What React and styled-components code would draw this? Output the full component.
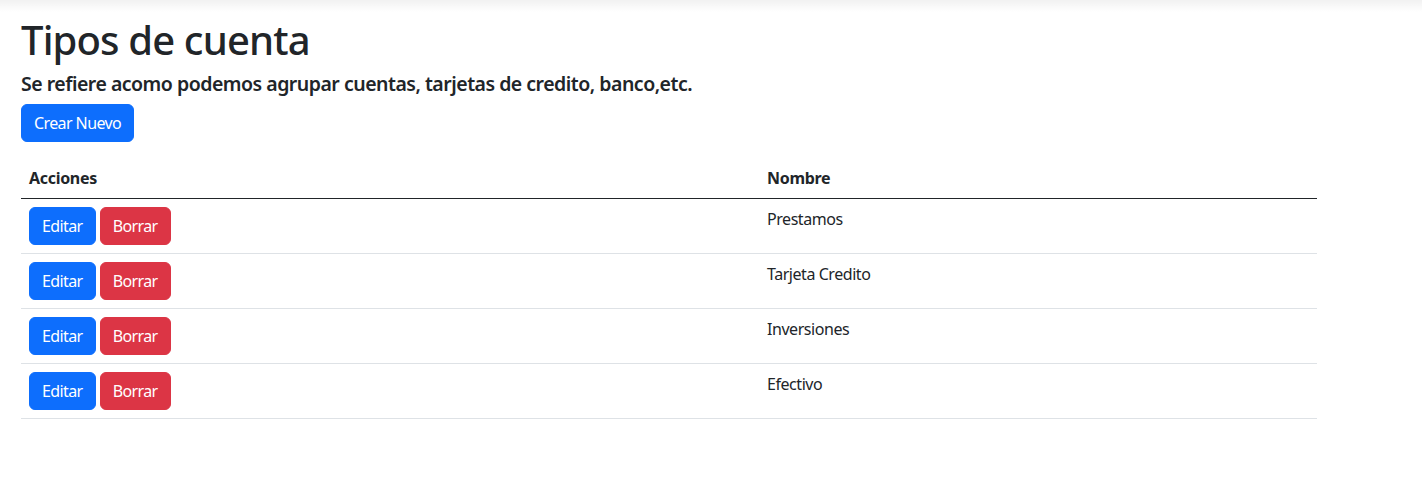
import React from 'react';
import styled, { createGlobalStyle } from 'styled-components';

const Global = createGlobalStyle`
  body {
    margin: 0;
    background: #fff;
    color: #212529;
    font-family: "Noto Sans", "Open Sans", sans-serif;
    font-size: 16px;
    line-height: 1.5;
  }
`;

// sombra del navbar que queda arriba del recorte
const TopShade = styled.div`
  height: 12px;
  background: linear-gradient(to bottom, rgba(0, 0, 0, 0.055), rgba(0, 0, 0, 0));
`;

const Container = styled.main`
  padding: 4px 21px 0;
  width: 1296px;
`;

const Titulo = styled.h1`
  margin: 0 0 8px;
  font-size: 40px;
  font-weight: 500;
  line-height: 48px;
  letter-spacing: -0.85px;
`;

const SubTitulo = styled.h5`
  margin: 0 0 8px;
  font-size: 19.5px;
  font-weight: 600;
  line-height: 24px;
  letter-spacing: -0.5px;
`;

const Boton = styled.button`
  font-family: inherit;
  font-size: 16px;
  line-height: 24px;
  letter-spacing: -0.6px;
  padding: 6px 12px;
  border: 1px solid ${(p) => p.$color};
  border-radius: 6px;
  background: ${(p) => p.$color};
  color: #fff;
  cursor: pointer;
`;

const Tabla = styled.table`
  margin-top: 16px;
  width: 100%;
  border-collapse: collapse;
`;

const Th = styled.th`
  text-align: left;
  vertical-align: top;
  font-weight: 700;
  padding: 8px;
  border-bottom: 1px solid #212529;
  width: ${(p) => p.$width || 'auto'};
  letter-spacing: -0.3px;
`;

const Fila = styled.tr`
  border-bottom: 1px solid #dee2e6;
`;

const Td = styled.td`
  padding: 8px;
  vertical-align: top;
  letter-spacing: -0.45px;
`;

const Acciones = styled.div`
  display: flex;
  gap: 4px;
`;

const tipos = ['Prestamos', 'Tarjeta Credito', 'Inversiones', 'Efectivo'];

export default function App() {
  return (
    <>
      <Global />
      <TopShade />
      <Container>
        <Titulo>Tipos de cuenta</Titulo>
        <SubTitulo>Se refiere acomo podemos agrupar cuentas, tarjetas de credito, banco,etc.</SubTitulo>
        <Boton $color="#0d6efd">Crear Nuevo</Boton>
        <Tabla>
          <thead>
            <tr>
              <Th $width="722px">Acciones</Th>
              <Th>Nombre</Th>
            </tr>
          </thead>
          <tbody>
            {tipos.map((t) => (
              <Fila key={t}>
                <Td>
                  <Acciones>
                    <Boton $color="#0d6efd">Editar</Boton>
                    <Boton $color="#dc3545">Borrar</Boton>
                  </Acciones>
                </Td>
                <Td>{t}</Td>
              </Fila>
            ))}
          </tbody>
        </Tabla>
      </Container>
    </>
  );
}
